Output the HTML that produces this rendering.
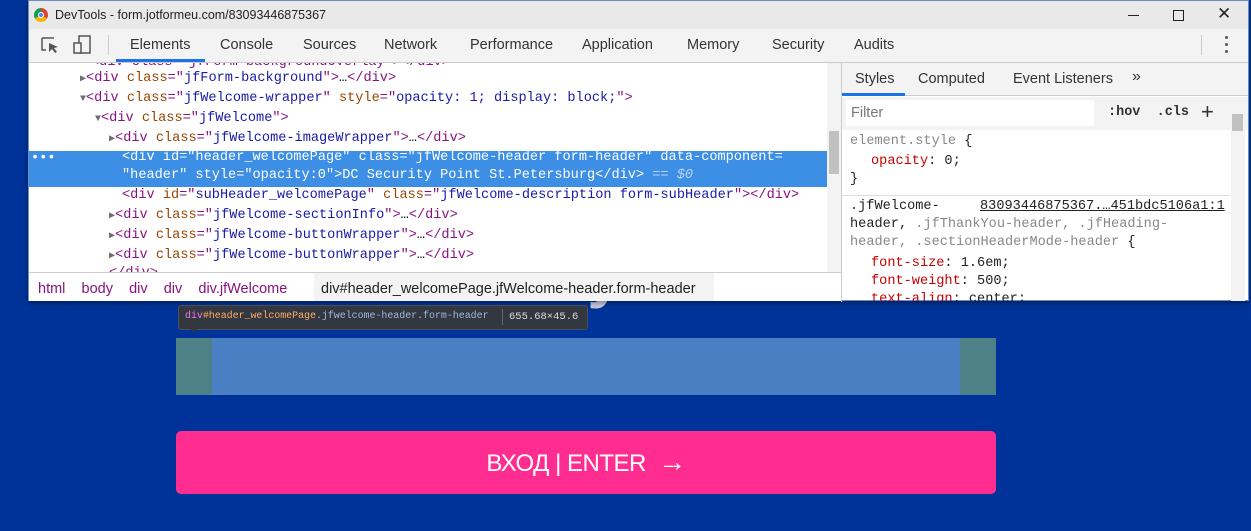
<!DOCTYPE html>
<html><head><meta charset="utf-8"><style>
*{margin:0;padding:0;box-sizing:border-box}
body{width:1251px;height:531px;background:#003399;position:relative;overflow:hidden;font-family:"Liberation Sans",sans-serif}
.a{position:absolute}
.mono{font-family:"Liberation Mono",monospace;font-size:13.6px;white-space:pre}
.tg{color:#881280}.at{color:#994500}.av{color:#1a1aa6}.tx{color:#222}
.line{position:absolute;left:0;height:20px;line-height:20px}
.tri{color:#6e6e6e;font-size:10px}
.tab{position:absolute;top:36px;font-size:14.5px;color:#333}
.sl{position:absolute;left:821px;font-family:"Liberation Mono",monospace;font-size:13.6px;white-space:pre;color:#222}
.pr{color:#c80000}.gr{color:#888}
</style></head><body>
<div class="a" style="left:200px;top:236px;font-size:64px;font-weight:bold;color:#c9cde0;letter-spacing:6px">DC Security Point</div>
<div class="a" style="left:28px;top:0;width:1221px;height:301px;background:#fff;border:1px solid #6c8fc0;box-shadow:0 2px 6px rgba(0,0,0,.4)">
 <div class="a" style="left:0;top:0;width:1219px;height:28px;background:#e9e9e9"></div>
 <div class="a" style="left:5px;top:7px;width:14px;height:14px;border-radius:50%;background:conic-gradient(#db4437 0 120deg,#f4b400 120deg 240deg,#0f9d58 240deg)"></div>
 <div class="a" style="left:9px;top:11px;width:6px;height:6px;border-radius:50%;background:#4285f4;border:1px solid #fff"></div>
 <div class="a" style="left:26px;top:7px;font-size:12.5px;color:#222">DevTools - form.jotformeu.com/83093446875367</div>
 <div class="a" style="left:1099px;top:14px;width:11px;height:1px;background:#222"></div>
 <div class="a" style="left:1144px;top:9px;width:11px;height:11px;border:1px solid #222"></div>
 <div class="a" style="left:1188px;top:3px;font-size:17px;color:#222">✕</div>
 <div class="a" style="left:0;top:28px;width:1219px;height:34px;background:#f3f3f3;border-bottom:1px solid #ccc"></div>
 <svg class="a" style="left:12px;top:36px" width="20" height="18"><path d="M1 1h12M1 1v12h4" stroke="#555" fill="none" stroke-width="1.5"/><path d="M8 6l9 4-4 1 3 4-2 1-3-4-3 3z" fill="#555"/></svg>
 <svg class="a" style="left:44px;top:34px" width="20" height="20"><rect x="6" y="1" width="11" height="17" stroke="#555" fill="none" stroke-width="1.5"/><rect x="1" y="8" width="7" height="10" stroke="#555" fill="#f3f3f3" stroke-width="1.5"/></svg>
 <div class="a" style="left:79px;top:34px;width:1px;height:20px;background:#ccc"></div>
 <div class="tab" style="left:101px">Elements</div>
 <div class="a" style="left:87px;top:58px;width:89px;height:3px;background:#1a73e8"></div>
 <div class="tab" style="left:191px">Console</div>
 <div class="tab" style="left:274px">Sources</div>
 <div class="tab" style="left:355px">Network</div>
 <div class="tab" style="left:441px">Performance</div>
 <div class="tab" style="left:553px">Application</div>
 <div class="tab" style="left:658px">Memory</div>
 <div class="tab" style="left:743px">Security</div>
 <div class="tab" style="left:825px">Audits</div>
 <div class="a" style="left:1172px;top:34px;width:1px;height:20px;background:#ccc"></div>
 <div class="a" style="left:1196px;top:35px;width:3px;height:3px;border-radius:50%;background:#555;box-shadow:0 7px 0 #555,0 14px 0 #555"></div>
 <div class="a" style="left:0;top:62px;width:798px;height:209px;overflow:hidden">
  <div class="mono" style="position:absolute;left:0;top:0;width:798px">
   <div class="line" style="top:-10px;left:62px"><span class="tg">&lt;div class="jfForm-backgroundOverlay"&gt;&lt;/div&gt;</span></div>
   <div class="line" style="top:6px;left:51px"><span class="tri">▶</span><span class="tg">&lt;div</span> <span class="at">class</span><span class="tg">="</span><span class="av">jfForm-background</span><span class="tg">"&gt;</span>…<span class="tg">&lt;/div&gt;</span></div>
   <div class="line" style="top:26px;left:51px"><span class="tri">▼</span><span class="tg">&lt;div</span> <span class="at">class</span><span class="tg">="</span><span class="av">jfWelcome-wrapper</span><span class="tg">"</span> <span class="at">style</span><span class="tg">="</span><span class="av">opacity: 1; display: block;</span><span class="tg">"&gt;</span></div>
   <div class="line" style="top:46px;left:66px"><span class="tri">▼</span><span class="tg">&lt;div</span> <span class="at">class</span><span class="tg">="</span><span class="av">jfWelcome</span><span class="tg">"&gt;</span></div>
   <div class="line" style="top:66px;left:80px"><span class="tri">▶</span><span class="tg">&lt;div</span> <span class="at">class</span><span class="tg">="</span><span class="av">jfWelcome-imageWrapper</span><span class="tg">"&gt;</span>…<span class="tg">&lt;/div&gt;</span></div>
   <div style="position:absolute;left:0;top:88px;width:798px;height:36px;background:#3d8fe6"></div>
   <div class="line" style="top:86px;left:2px;color:#fff">•••</div>
   <div class="line" style="top:86px;left:93px;color:#fff;height:18px;line-height:18px">&lt;div id="header_welcomePage" class="jfWelcome-header form-header" data-component=</div>
   <div class="line" style="top:104px;left:93px;color:#fff;height:18px;line-height:18px">"header" style="opacity:0"&gt;DC Security Point St.Petersburg&lt;/div&gt; <span style="color:#b9d4f5;font-style:italic">== $0</span></div>
   <div class="line" style="top:123px;left:93px"><span class="tg">&lt;div</span> <span class="at">id</span><span class="tg">="</span><span class="av">subHeader_welcomePage</span><span class="tg">"</span> <span class="at">class</span><span class="tg">="</span><span class="av">jfWelcome-description form-subHeader</span><span class="tg">"&gt;&lt;/div&gt;</span></div>
   <div class="line" style="top:143px;left:80px"><span class="tri">▶</span><span class="tg">&lt;div</span> <span class="at">class</span><span class="tg">="</span><span class="av">jfWelcome-sectionInfo</span><span class="tg">"&gt;</span>…<span class="tg">&lt;/div&gt;</span></div>
   <div class="line" style="top:163px;left:80px"><span class="tri">▶</span><span class="tg">&lt;div</span> <span class="at">class</span><span class="tg">="</span><span class="av">jfWelcome-buttonWrapper</span><span class="tg">"&gt;</span>…<span class="tg">&lt;/div&gt;</span></div>
   <div class="line" style="top:183px;left:80px"><span class="tri">▶</span><span class="tg">&lt;div</span> <span class="at">class</span><span class="tg">="</span><span class="av">jfWelcome-buttonWrapper</span><span class="tg">"&gt;</span>…<span class="tg">&lt;/div&gt;</span></div>
   <div class="line" style="top:201px;left:80px"><span class="tg">&lt;/div&gt;</span></div>
  </div>
 </div>
 <div class="a" style="left:798px;top:62px;width:14px;height:209px;background:#f3f3f3"></div>
 <div class="a" style="left:800px;top:130px;width:10px;height:43px;background:#c1c1c1"></div>
 <div class="a" style="left:812px;top:62px;width:1px;height:239px;background:#ccc"></div>
 <div class="a" style="left:0;top:271px;width:812px;height:29px;background:#fff;border-top:1px solid #ccc"></div>
 <div class="a" style="left:285px;top:272px;width:400px;height:28px;background:#f3f3f3"></div>
 <div class="a" style="left:9px;top:280px;font-size:14.5px;color:#881280;white-space:pre">html    body    div    div    <span>div.jfWelcome</span></div>
 <div class="a" style="left:292px;top:280px;font-size:14.5px;color:#222">div#header_welcomePage.jfWelcome-header.form-header</div>
 <div class="a" style="left:813px;top:62px;width:406px;height:33px;background:#f3f3f3;border-bottom:1px solid #ccc"></div>
 <div class="a" style="left:826px;top:70px;font-size:14.5px;color:#333">Styles</div>
 <div class="a" style="left:889px;top:70px;font-size:14.5px;color:#333">Computed</div>
 <div class="a" style="left:984px;top:70px;font-size:14.5px;color:#333">Event Listeners</div>
 <div class="a" style="left:1103px;top:67px;font-size:16px;color:#333">»</div>
 <div class="a" style="left:813px;top:92px;width:63px;height:3px;background:#1a73e8"></div>
 <div class="a" style="left:813px;top:96px;width:406px;height:33px;background:#f3f3f3"></div>
 <div class="a" style="left:817px;top:99px;width:248px;height:26px;background:#fff"></div>
 <div class="a" style="left:822px;top:104px;font-size:14.5px;color:#777">Filter</div>
 <div class="a" style="left:1079px;top:104px;font-family:'Liberation Mono',monospace;font-size:13.5px;font-weight:bold;color:#333;white-space:pre">:hov  .cls</div>
 <div class="a" style="left:1172px;top:98px;font-size:22px;color:#333">+</div>
 <div class="a" style="left:1202px;top:112px;width:14px;height:188px;background:#f3f3f3"></div>
 <div class="a" style="left:1203px;top:113px;width:11px;height:17px;background:#c1c1c1"></div>
 <div class="sl" style="top:133px"><span class="gr">element.style</span> {</div>
 <div class="sl" style="top:153px;left:842px"><span class="pr">opacity</span>: 0;</div>
 <div class="sl" style="top:171px">}</div>
 <div class="a" style="left:813px;top:194px;width:388px;height:1px;background:#ddd"></div>
 <div class="sl" style="top:198px">.jfWelcome-</div>
 <div class="sl" style="top:198px;left:951px;text-decoration:underline">83093446875367.…451bdc5106a1:1</div>
 <div class="sl" style="top:216px">header, <span class="gr">.jfThankYou-header, .jfHeading-</span></div>
 <div class="sl" style="top:234px"><span class="gr">header, .sectionHeaderMode-header</span> {</div>
 <div class="sl" style="top:255px;left:842px"><span class="pr">font-size</span>: 1.6em;</div>
 <div class="sl" style="top:273px;left:842px"><span class="pr">font-weight</span>: 500;</div>
 <div class="sl" style="top:291px;left:842px;height:9px;overflow:hidden"><span class="pr">text-align</span>: center;</div>
</div>
<div class="a" style="left:178px;top:305px;width:410px;height:25px;background:#333740;border-radius:3px;border:1px solid #4a4f58"></div>
<div class="a" style="left:187px;top:325px;width:0;height:0;border-left:7px solid transparent;border-right:7px solid transparent;border-top:8px solid #333740"></div>
<div class="a" style="left:185px;top:311px;font-family:'Liberation Mono',monospace;font-size:10px;white-space:pre;letter-spacing:-0.05px"><span style="color:#ee78e6">div</span><span style="color:#ffab66">#header_welcomePage</span><span style="color:#9bbbdc">.jfwelcome-header.form-header</span></div>
<div class="a" style="left:502px;top:309px;width:1px;height:16px;background:#666"></div>
<div class="a" style="left:509px;top:311px;font-family:'Liberation Mono',monospace;font-size:10.5px;color:#ddd">655.68×45.6</div>
<div class="a" style="left:176px;top:338px;width:820px;height:57px;background:#4e8187"></div>
<div class="a" style="left:212px;top:338px;width:748px;height:57px;background:#4a7fc4"></div>
<div class="a" style="left:176px;top:431px;width:820px;height:63px;background:#ff2d8f;border-radius:5px"></div>
<div class="a" style="left:176px;top:446px;width:820px;text-align:center;color:#fff;font-size:24px;letter-spacing:-0.5px">ВХОД | ENTER&nbsp;&nbsp;<span style="font-size:28px">→</span></div>
</body></html>
